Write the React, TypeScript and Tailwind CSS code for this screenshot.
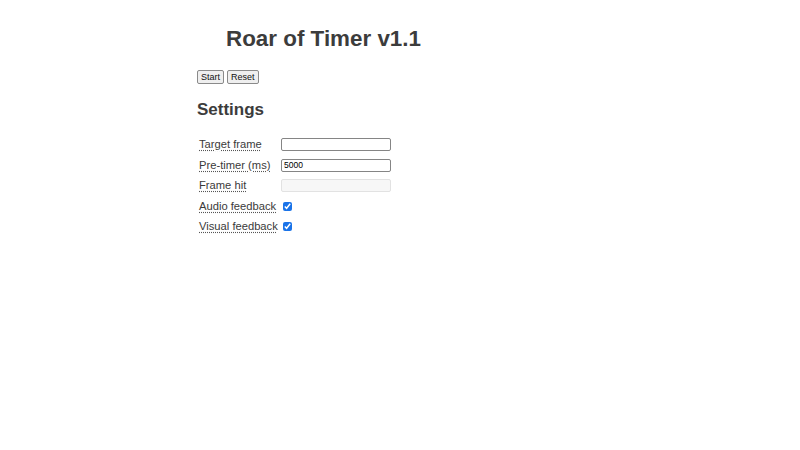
import React from "react";

const rows: { label: string; kind: "text" | "number" | "disabled" | "check"; value?: string }[] = [
  { label: "Target frame", kind: "text" },
  { label: "Pre-timer (ms)", kind: "number", value: "5000" },
  { label: "Frame hit", kind: "disabled" },
  { label: "Audio feedback", kind: "check" },
  { label: "Visual feedback", kind: "check" },
];

export default function App() {
  return (
    <div className="min-h-[450px] w-full bg-white text-[#333]" style={{ fontFamily: '"Liberation Sans", Arial, sans-serif' }}>
      <div className="mx-auto w-[406px] pt-[26px]">
        <h1 className="w-[253px] text-center text-[22.4px] font-bold leading-[26px] text-[#3c3c3c]">Roar of Timer v1.1</h1>
        <div className="mt-[18px] flex gap-[3px]">
          <button className="h-[14px] rounded-[2px] border border-[#8a8a8a] bg-[#efefef] px-[3px] text-[9px] leading-[12px] text-[#111]">Start</button>
          <button className="h-[14px] rounded-[2px] border border-[#8a8a8a] bg-[#efefef] px-[3px] text-[9px] leading-[12px] text-[#111]">Reset</button>
        </div>
        <h2 className="mt-[15px] text-[17px] font-bold leading-[22px] text-[#3c3c3c]">Settings</h2>
        <div className="mt-[17px] grid grid-cols-[82px_auto] gap-y-[7.5px] pl-[2px]">
          {rows.map((r) => (
            <React.Fragment key={r.label}>
              <span className="text-[11.2px] leading-[13px] text-[#3a3a3a] underline decoration-dotted decoration-[#555] underline-offset-[1.5px] whitespace-nowrap">
                {r.label}
              </span>
              <div className="flex h-[13px] items-center">
                {r.kind === "check" ? (
                  <input type="checkbox" defaultChecked className="ml-[2px] m-0 h-[9px] w-[9px] accent-[#1a73e8]" />
                ) : (
                  <input
                    type="text"
                    defaultValue={r.value}
                    disabled={r.kind === "disabled"}
                    className={
                      r.kind === "disabled"
                        ? "h-[13px] w-[110px] rounded-[2px] border border-[#e2e2e2] bg-[#f7f7f7] px-[2px] text-[8px]"
                        : "h-[13px] w-[110px] rounded-[2px] border border-[#858585] bg-white px-[2px] text-[8.5px] text-black outline-none"
                    }
                  />
                )}
              </div>
            </React.Fragment>
          ))}
        </div>
      </div>
    </div>
  );
}
